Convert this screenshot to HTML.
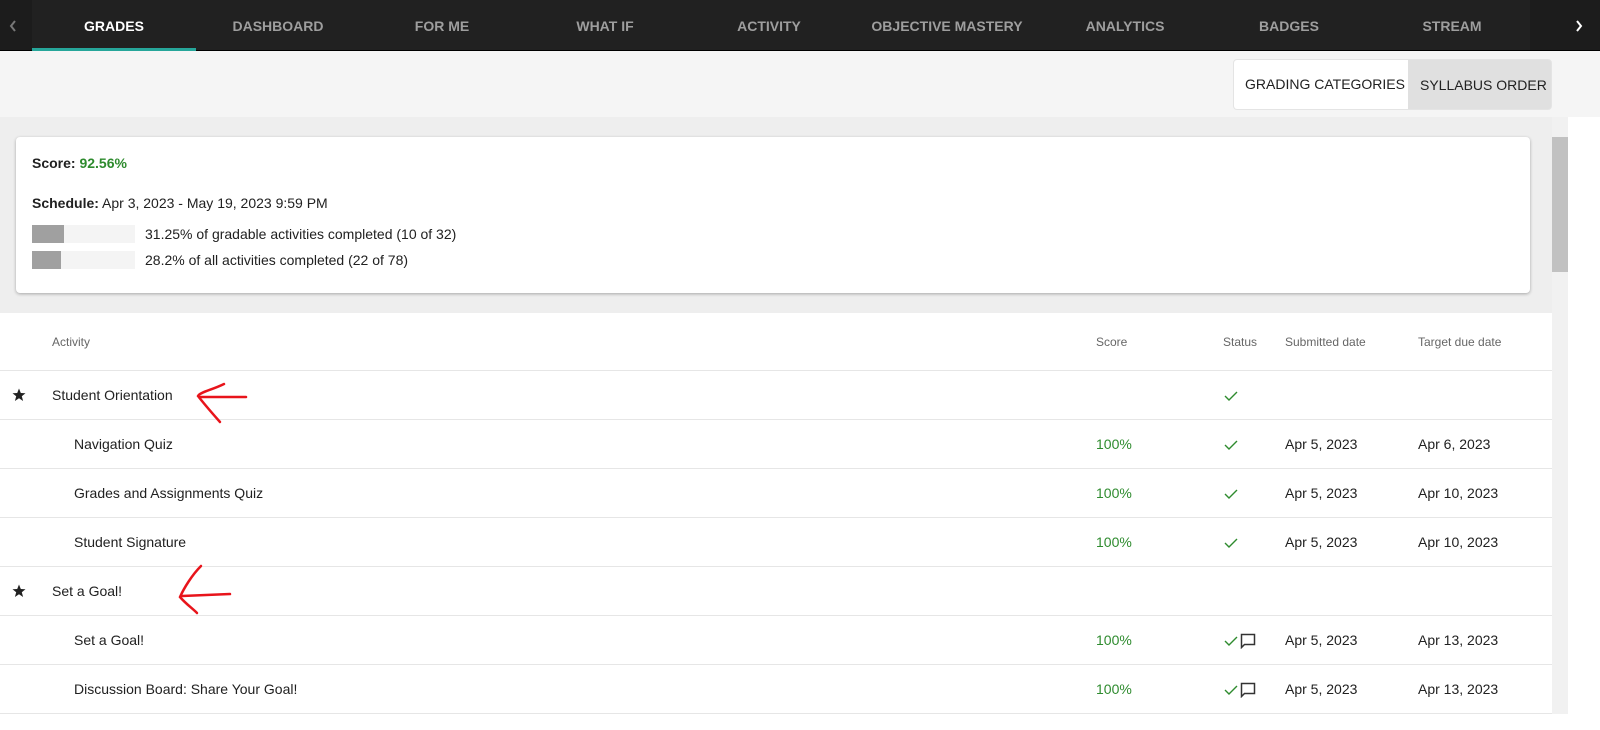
<!DOCTYPE html>
<html><head><meta charset="utf-8"><style>
*{box-sizing:border-box;margin:0;padding:0}
body{width:1600px;height:730px;overflow:hidden;background:#fff;font-family:"Liberation Sans",sans-serif;color:#212121;position:relative}
.nav{position:absolute;left:0;top:0;width:1600px;height:51px;background:#212121;border-bottom:1px solid #000}
.nav .t{position:absolute;top:18px;font-size:14px;font-weight:bold;color:#9e9e9e;text-align:center;width:160px}
.nav .t.a{color:#fff}
.ul{position:absolute;left:32px;top:48px;width:164px;height:3px;background:#26a69a}
.abs{position:absolute}
.row{position:absolute;left:0;width:1552px;height:49px;border-bottom:1px solid #e6e6e6;font-size:14px}
.row span{position:absolute;top:16px}
.row svg{position:absolute}
.g{color:#2e8b2e}
</style></head><body>
<div class="nav">
<div class="abs" style="left:0;top:0;width:32px;height:50px;background:#1c1c1c"></div>
<svg class="abs" style="left:8px;top:19px" width="10" height="14"><path d="M7 2 L3 7 L7 12" stroke="#777" stroke-width="2" fill="none"/></svg>
<div class="t a" style="left:34px">GRADES</div>
<div class="t" style="left:198px">DASHBOARD</div>
<div class="t" style="left:362px">FOR ME</div>
<div class="t" style="left:525px">WHAT IF</div>
<div class="t" style="left:689px">ACTIVITY</div>
<div class="t" style="left:867px;width:160px">OBJECTIVE MASTERY</div>
<div class="t" style="left:1045px">ANALYTICS</div>
<div class="t" style="left:1209px">BADGES</div>
<div class="t" style="left:1372px">STREAM</div>
<div class="abs" style="left:1530px;top:0;width:70px;height:50px;background:#1c1c1c"></div>
<svg class="abs" style="left:1574px;top:19px" width="10" height="14"><path d="M3 2 L7 7 L3 12" stroke="#fff" stroke-width="2" fill="none"/></svg>
<div class="ul"></div>
</div>
<div class="abs" style="left:0;top:51px;width:1600px;height:66px;background:#f5f5f5"></div>
<div class="abs" style="left:1233px;top:59px;width:319px;height:51px;border:1px solid #e4e4e4;border-radius:4px;overflow:hidden;background:#e0e0e0;font-size:14px">
<div class="abs" style="left:0;top:0;width:174px;height:51px;background:#fff"></div>
<span class="abs" style="left:11px;top:16px">GRADING CATEGORIES</span>
<span class="abs" style="left:186px;top:17px">SYLLABUS ORDER</span>
</div>
<div class="abs" style="left:0;top:117px;width:1552px;height:196px;background:#eeeeee"></div>
<div class="abs" style="left:16px;top:137px;width:1514px;height:156px;background:#fff;border-radius:4px;box-shadow:0 1px 3px rgba(0,0,0,.3);font-size:14px">
<div class="abs" style="left:16px;top:18px"><b>Score:</b> <b class="g">92.56%</b></div>
<div class="abs" style="left:16px;top:58px"><b>Schedule:</b> Apr 3, 2023 - May 19, 2023 9:59 PM</div>
<div class="abs" style="left:16px;top:88px;width:103px;height:18px;background:#f4f4f4"><div style="width:32px;height:18px;background:#a0a0a0"></div></div>
<div class="abs" style="left:129px;top:89px">31.25% of gradable activities completed (10 of 32)</div>
<div class="abs" style="left:16px;top:114px;width:103px;height:18px;background:#f4f4f4"><div style="width:29px;height:18px;background:#a0a0a0"></div></div>
<div class="abs" style="left:129px;top:115px">28.2% of all activities completed (22 of 78)</div>
</div>
<div class="abs" style="left:1552px;top:117px;width:16px;height:597px;background:#f1f1f1"></div>
<div class="abs" style="left:1552px;top:137px;width:16px;height:135px;background:#c1c1c1"></div>
<div class="row" style="top:322px;font-size:12px;color:#666"><span style="left:52px;top:13px">Activity</span><span style="left:1096px;top:13px">Score</span><span style="left:1223px;top:13px">Status</span><span style="left:1285px;top:13px">Submitted date</span><span style="left:1418px;top:13px">Target due date</span></div>

<div class="row" style="top:371px"><svg style="left:12px;top:17px" width="14" height="14"><path d="M7 0.5 L8.8 5 L13.5 5.2 L9.8 8.2 L11.1 13 L7 10.3 L2.9 13 L4.2 8.2 L0.5 5.2 L5.2 5z" fill="#222"/></svg><span style="left:52px">Student Orientation</span><svg style="left:1224px;top:19px" width="14" height="12"><path d="M1 6 L5 10 L13 2" stroke="#2e8b2e" stroke-width="1.4" fill="none"/></svg></div>
<div class="row" style="top:420px"><span style="left:74px">Navigation Quiz</span><span class="g" style="left:1096px">100%</span><svg style="left:1224px;top:19px" width="14" height="12"><path d="M1 6 L5 10 L13 2" stroke="#2e8b2e" stroke-width="1.4" fill="none"/></svg><span style="left:1285px">Apr 5, 2023</span><span style="left:1418px">Apr 6, 2023</span></div>
<div class="row" style="top:469px"><span style="left:74px">Grades and Assignments Quiz</span><span class="g" style="left:1096px">100%</span><svg style="left:1224px;top:19px" width="14" height="12"><path d="M1 6 L5 10 L13 2" stroke="#2e8b2e" stroke-width="1.4" fill="none"/></svg><span style="left:1285px">Apr 5, 2023</span><span style="left:1418px">Apr 10, 2023</span></div>
<div class="row" style="top:518px"><span style="left:74px">Student Signature</span><span class="g" style="left:1096px">100%</span><svg style="left:1224px;top:19px" width="14" height="12"><path d="M1 6 L5 10 L13 2" stroke="#2e8b2e" stroke-width="1.4" fill="none"/></svg><span style="left:1285px">Apr 5, 2023</span><span style="left:1418px">Apr 10, 2023</span></div>
<div class="row" style="top:567px"><svg style="left:12px;top:17px" width="14" height="14"><path d="M7 0.5 L8.8 5 L13.5 5.2 L9.8 8.2 L11.1 13 L7 10.3 L2.9 13 L4.2 8.2 L0.5 5.2 L5.2 5z" fill="#222"/></svg><span style="left:52px">Set a Goal!</span></div>
<div class="row" style="top:616px"><span style="left:74px">Set a Goal!</span><span class="g" style="left:1096px">100%</span><svg style="left:1224px;top:19px" width="14" height="12"><path d="M1 6 L5 10 L13 2" stroke="#2e8b2e" stroke-width="1.4" fill="none"/></svg><svg style="left:1240px;top:17px" width="16" height="16"><path d="M1.5 1.5h13v10h-10l-3 3z" stroke="#333" stroke-width="1.5" fill="none"/></svg><span style="left:1285px">Apr 5, 2023</span><span style="left:1418px">Apr 13, 2023</span></div>
<div class="row" style="top:665px"><span style="left:74px">Discussion Board: Share Your Goal!</span><span class="g" style="left:1096px">100%</span><svg style="left:1224px;top:19px" width="14" height="12"><path d="M1 6 L5 10 L13 2" stroke="#2e8b2e" stroke-width="1.4" fill="none"/></svg><svg style="left:1240px;top:17px" width="16" height="16"><path d="M1.5 1.5h13v10h-10l-3 3z" stroke="#333" stroke-width="1.5" fill="none"/></svg><span style="left:1285px">Apr 5, 2023</span><span style="left:1418px">Apr 13, 2023</span></div>
<svg class="abs" style="left:0;top:0" width="1600" height="730"><g stroke="#e8141b" stroke-width="2.5" fill="none" stroke-linecap="round">
<path d="M224 384 C212 390 200 392 198 396 C205 405 212 413 220 422"/><path d="M200 397 L246 397"/>
<path d="M201 566 C192 575 184 588 180 597 C186 604 192 608 197 613"/><path d="M182 596 L230 594"/>
</g></svg>
</body></html>
